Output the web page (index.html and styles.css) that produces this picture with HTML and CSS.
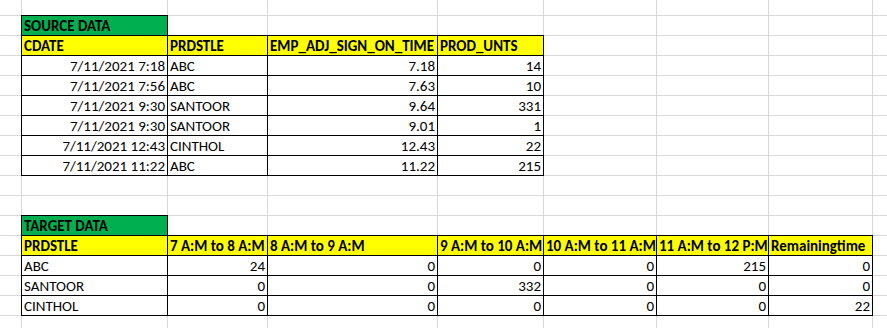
FILE: index.html
```html
<!DOCTYPE html>
<html>
<head>
<meta charset="utf-8">
<link rel="stylesheet" href="styles.css">
</head>
<body>
<table class="sheet">
  <colgroup>
    <col class="ca"><col class="cb"><col class="cc"><col class="cd"><col class="ce"><col class="cf"><col class="cg"><col class="ch"><col class="ci">
  </colgroup>
  <tr class="r1"><td></td><td></td><td></td><td></td><td></td><td></td><td></td><td></td><td></td></tr>
  <tr><td></td><td class="b title">SOURCE DATA</td><td></td><td></td><td></td><td></td><td></td><td></td><td></td></tr>
  <tr><td></td><td class="b hd">CDATE</td><td class="b hd">PRDSTLE</td><td class="b hd">EMP_ADJ_SIGN_ON_TIME</td><td class="b hd">PROD_UNTS</td><td></td><td></td><td></td><td></td></tr>
  <tr><td></td><td class="b n">7/11/2021 7:18</td><td class="b">ABC</td><td class="b n">7.18</td><td class="b n">14</td><td></td><td></td><td></td><td></td></tr>
  <tr><td></td><td class="b n">7/11/2021 7:56</td><td class="b">ABC</td><td class="b n">7.63</td><td class="b n">10</td><td></td><td></td><td></td><td></td></tr>
  <tr><td></td><td class="b n">7/11/2021 9:30</td><td class="b">SANTOOR</td><td class="b n">9.64</td><td class="b n">331</td><td></td><td></td><td></td><td></td></tr>
  <tr><td></td><td class="b n">7/11/2021 9:30</td><td class="b">SANTOOR</td><td class="b n">9.01</td><td class="b n">1</td><td></td><td></td><td></td><td></td></tr>
  <tr><td></td><td class="b n">7/11/2021 12:43</td><td class="b">CINTHOL</td><td class="b n">12.43</td><td class="b n">22</td><td></td><td></td><td></td><td></td></tr>
  <tr><td></td><td class="b n">7/11/2021 11:22</td><td class="b">ABC</td><td class="b n">11.22</td><td class="b n">215</td><td></td><td></td><td></td><td></td></tr>
  <tr><td></td><td></td><td></td><td></td><td></td><td></td><td></td><td></td><td></td></tr>
  <tr><td></td><td></td><td></td><td></td><td></td><td></td><td></td><td></td><td></td></tr>
  <tr><td></td><td class="b title">TARGET DATA</td><td></td><td></td><td></td><td></td><td></td><td></td><td></td></tr>
  <tr><td></td><td class="b hd">PRDSTLE</td><td class="b hd">7 A:M to 8 A:M</td><td class="b hd">8 A:M to 9 A:M</td><td class="b hd">9 A:M to 10 A:M</td><td class="b hd">10 A:M to 11 A:M</td><td class="b hd">11 A:M to 12 P:M</td><td class="b hd">Remainingtime</td><td></td></tr>
  <tr><td></td><td class="b">ABC</td><td class="b n">24</td><td class="b n">0</td><td class="b n">0</td><td class="b n">0</td><td class="b n">215</td><td class="b n">0</td><td></td></tr>
  <tr><td></td><td class="b">SANTOOR</td><td class="b n">0</td><td class="b n">0</td><td class="b n">332</td><td class="b n">0</td><td class="b n">0</td><td class="b n">0</td><td></td></tr>
  <tr><td></td><td class="b">CINTHOL</td><td class="b n">0</td><td class="b n">0</td><td class="b n">0</td><td class="b n">0</td><td class="b n">0</td><td class="b n">22</td><td></td></tr>
  <tr><td></td><td></td><td></td><td></td><td></td><td></td><td></td><td></td><td></td></tr>
</table>
</body>
</html>
```

FILE: styles.css
```css
html, body {
  margin: 0;
  padding: 0;
  background: #ffffff;
  overflow: hidden;
}

.sheet {
  table-layout: fixed;
  width: 895px;
  border-collapse: separate;
  border-spacing: 1px;
  background: #d9d9d9;
  margin: -1px 0 0 -1px;
  font-family: Carlito, Lato, "Liberation Sans", sans-serif;
  font-size: 15px;
  color: #000;
}

.ca { width: 21px; }
.cb { width: 145px; }
.cc { width: 99px; }
.cd { width: 169px; }
.ce { width: 105px; }
.cf { width: 112px; }
.cg { width: 111px; }
.ch { width: 103px; }
.ci { width: 20px; }

.sheet tr { height: 19px; }
.sheet tr.r1 { height: 15px; }

.sheet td {
  background: #ffffff;
  padding: 0 2px 0 2px;
  height: 19px;
  line-height: 17px;
  vertical-align: bottom;
  white-space: nowrap;
  overflow: hidden;
  text-align: left;
}

.sheet tr.r1 td { height: 15px; }

.sheet td.b {
  box-shadow: 0 0 0 1px #000;
}

.sheet td.n { text-align: right; }

.sheet td.title {
  background: #00b050;
  font-weight: bold;
}

.sheet td.hd {
  background: #ffff00;
  font-weight: bold;
}
```
